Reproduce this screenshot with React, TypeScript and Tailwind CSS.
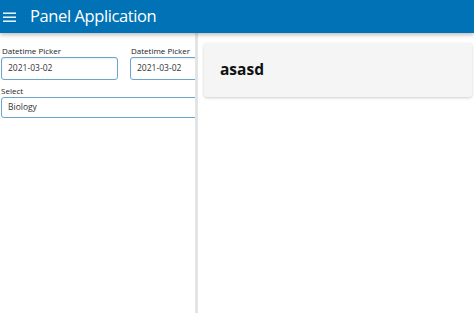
import { useState } from "react";

const font = { fontFamily: '"Open Sans", "Noto Sans", sans-serif' };

function DateField({ label, value }: { label: string; value: string }) {
  return (
    <div className="flex flex-col w-[117px] shrink-0">
      <label className="text-[8px] leading-[11px] text-[#222] pl-[1px] whitespace-nowrap">{label}</label>
      <div className="mt-[1px] h-[23px] border border-[#6aa6cc] rounded-[3px] bg-white flex items-center pl-[6px] text-[8.5px] text-[#333] shadow-[inset_0_1px_2px_rgba(0,0,0,0.08)]">
        {value}
      </div>
    </div>
  );
}

export default function App() {
  const [subject] = useState("Biology");

  return (
    <div className="w-[474px] h-[313px] bg-white overflow-hidden flex flex-col" style={font}>
      {/* header */}
      <header className="h-[33px] shrink-0 bg-[#0072b5] flex items-center text-white shadow-[0_2px_4px_rgba(0,0,0,0.25)] z-10">
        <svg width="14" height="12" viewBox="0 0 14 12" className="ml-[3px]">
          <rect x="0" y="1.5" width="13" height="1.4" fill="white" />
          <rect x="0" y="5.5" width="13" height="1.4" fill="white" />
          <rect x="0" y="9.5" width="13" height="1.4" fill="white" />
        </svg>
        <h1 className="ml-[13px] text-[16.5px] leading-none tracking-[-0.4px]">Panel Application</h1>
      </header>

      <div className="flex flex-1 min-h-0">
        {/* sidebar */}
        <aside className="w-[198px] shrink-0 overflow-hidden pt-[12px] pl-[1px] border-r-[3px] border-[#e4e4e4]">
          <div className="flex gap-[12px]">
            <DateField label="Datetime Picker" value="2021-03-02" />
            <DateField label="Datetime Picker" value="2021-03-02" />
          </div>
          <div className="mt-[5px] flex flex-col">
            <label className="text-[8px] leading-[11px] text-[#222]">Select</label>
            <div className="mt-[1px] h-[21px] w-[200px] border border-[#6aa6cc] rounded-[3px] bg-white flex items-center pl-[6px] text-[8.5px] text-[#333]">
              {subject}
            </div>
          </div>
        </aside>

        {/* main */}
        <main className="flex-1 pt-[10px] pl-[6px] pr-[2px]">
          <div className="h-[54px] bg-[#f5f5f5] rounded-[3px] shadow-[0_1px_3px_rgba(0,0,0,0.2)] flex items-center pl-[16px]">
            <span className="text-[15.5px] font-bold text-[#111]">asasd</span>
          </div>
        </main>
      </div>
    </div>
  );
}
